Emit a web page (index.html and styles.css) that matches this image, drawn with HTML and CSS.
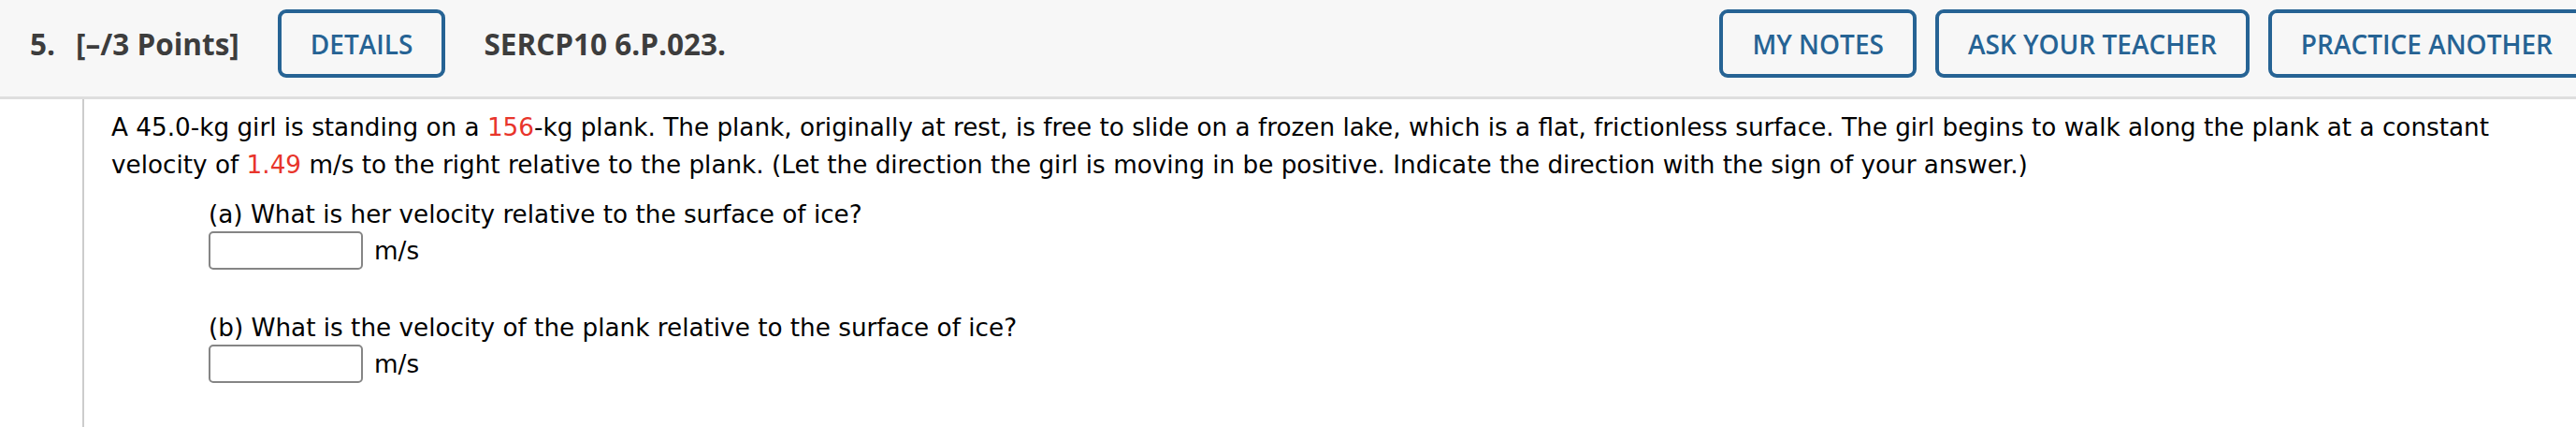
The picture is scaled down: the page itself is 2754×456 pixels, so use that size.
FILE: index.html
```html
<!DOCTYPE html>
<html lang="en">
<head>
<meta charset="utf-8">
<title>SERCP10 6.P.023.</title>
<link rel="stylesheet" href="styles.css">
</head>
<body>
<div class="question">
  <div class="q-header">
    <span class="q-num">5.</span>
    <span class="q-points">[–/3 Points]</span>
    <button class="q-btn q-details">DETAILS</button>
    <span class="q-code">SERCP10 6.P.023.</span>
    <div class="q-actions">
      <button class="q-btn">MY NOTES</button>
      <button class="q-btn">ASK YOUR TEACHER</button>
      <button class="q-btn">PRACTICE ANOTHER</button>
    </div>
  </div>
  <div class="q-body">
    <p class="q-text">A 45.0-kg girl is standing on a <span class="red">156</span>-kg plank. The plank, originally at rest, is free to slide on a frozen lake, which is a flat, frictionless surface. The girl begins to walk along the plank at a constant velocity of <span class="red">1.49</span> m/s to the right relative to the plank. (Let the direction the girl is moving in be positive. Indicate the direction with the sign of your answer.)</p>
    <div class="q-part">
      <p class="part-label">(a) What is her velocity relative to the surface of ice?</p>
      <div class="answer">
        <input class="answer-box" type="text">
        <span class="unit">m/s</span>
      </div>
    </div>
    <div class="q-part part-b">
      <p class="part-label">(b) What is the velocity of the plank relative to the surface of ice?</p>
      <div class="answer">
        <input class="answer-box" type="text">
        <span class="unit">m/s</span>
      </div>
    </div>
  </div>
</div>
</body>
</html>
```
FILE: styles.css
```css
html, body {
  margin: 0;
  padding: 0;
  background: #ffffff;
  overflow: hidden;
}

body {
  font-family: "DejaVu Sans", Verdana, sans-serif;
  color: #000;
}

.question {
  width: 2754px;
  height: 456px;
  overflow: hidden;
}

.q-header {
  display: flex;
  align-items: flex-start;
  height: 93px;
  padding: 10px 0 0 32px;
  box-sizing: content-box;
  background: #f7f7f7;
  border-bottom: 3px solid #dedede;
  font-family: "Open Sans", sans-serif;
  overflow: hidden;
}

.q-num,
.q-points,
.q-code {
  font-size: 31.5px;
  font-weight: 700;
  color: #3d3d3d;
  line-height: 73px;
  white-space: nowrap;
}

.q-num {
  margin-right: 22px;
}

.q-details {
  margin-left: 41px;
  margin-right: 41px;
}

.q-btn {
  flex: none;
  height: 73px;
  box-sizing: border-box;
  padding: 0 31px;
  border: 4px solid #266394;
  border-radius: 9px;
  background: #f7f7f7;
  color: #266394;
  font-family: "Open Sans", sans-serif;
  font-size: 28px;
  font-weight: 600;
  white-space: nowrap;
  cursor: pointer;
}

.q-actions {
  display: flex;
  gap: 20px;
  margin-left: auto;
  margin-right: -10px;
  flex: none;
}

.q-body {
  margin-left: 88px;
  border-left: 2px solid #cccccc;
  padding: 10px 60px 40px 29px;
  min-height: 300px;
  font-size: 26.25px;
  line-height: 40px;
}

.q-text {
  margin: 0;
}

.red {
  color: #e8352b;
}

.q-part {
  margin-left: 104px;
  margin-top: 13px;
}

.part-b {
  margin-top: 42px;
}

.part-label {
  margin: 0;
}

.answer {
  display: flex;
  align-items: center;
  gap: 12px;
  margin-top: -2px;
}

.answer-box {
  width: 165px;
  height: 41px;
  box-sizing: border-box;
  margin: 0;
  border: 2px solid #858585;
  border-radius: 5px;
  background: #fff;
  font-size: 23px;
}

.unit {
  line-height: 40px;
}
```
